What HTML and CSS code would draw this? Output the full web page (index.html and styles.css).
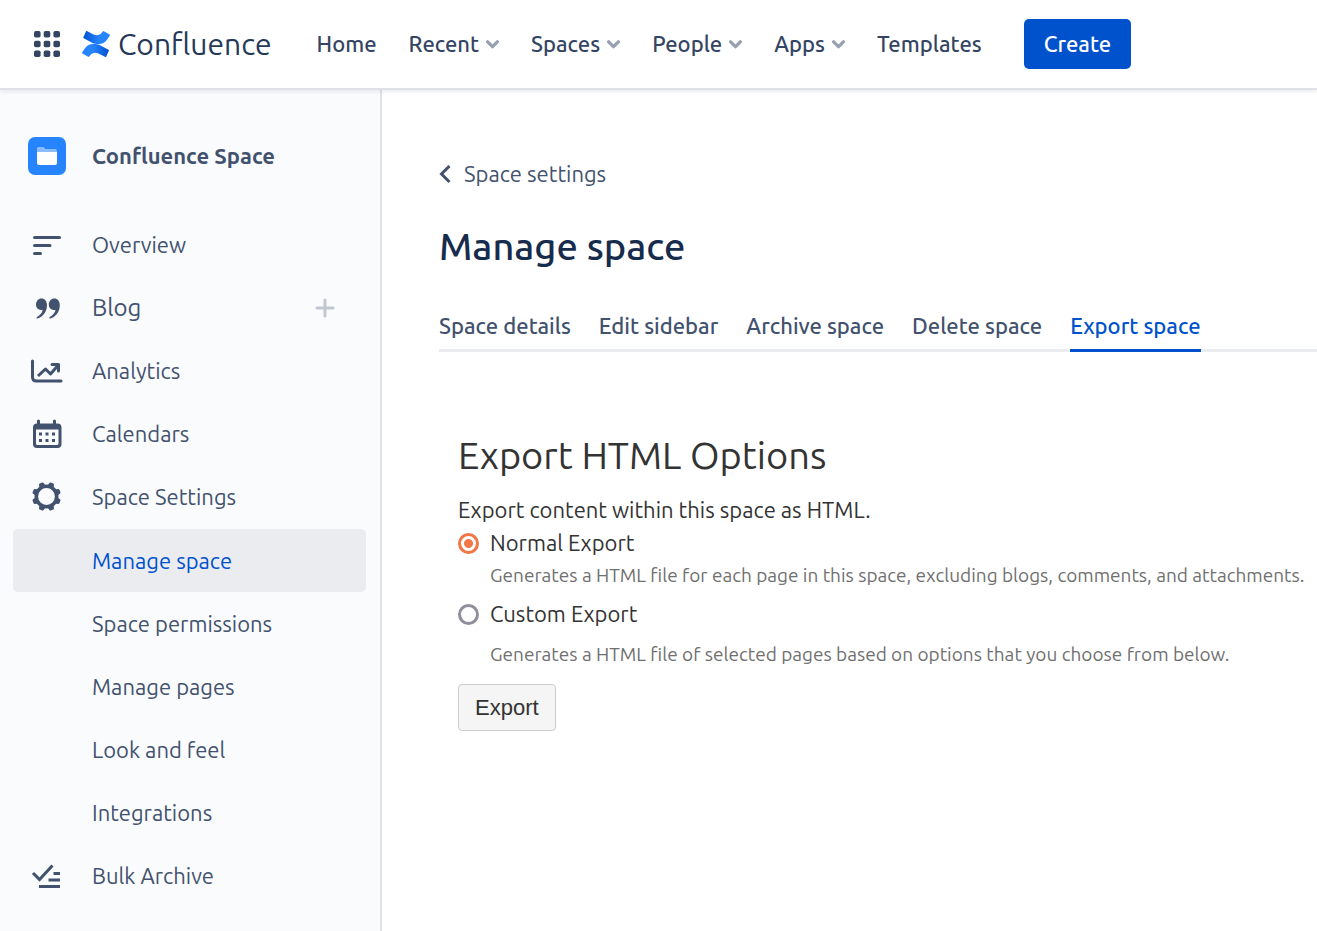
FILE: index.html
```html
<!DOCTYPE html>
<html lang="en">
<head>
    <meta charset="UTF-8">
    <meta name="viewport" content="width=device-width, initial-scale=1.0">
    <title>Manage space - Confluence</title>
    <link rel="stylesheet" href="styles.css">
</head>
<body>
    <header class="topbar">
        <button class="icon-btn" type="button" aria-label="Switch product">
            <svg width="26" height="26" viewBox="0 0 26 26" fill="#344563">
                <rect x="0" y="0" width="6.600" height="6.600" rx="1.800"/>
                <rect x="9.700" y="0" width="6.600" height="6.600" rx="1.800"/>
                <rect x="19.400" y="0" width="6.600" height="6.600" rx="1.800"/>
                <rect x="0" y="9.700" width="6.600" height="6.600" rx="1.800"/>
                <rect x="9.700" y="9.700" width="6.600" height="6.600" rx="1.800"/>
                <rect x="19.400" y="9.700" width="6.600" height="6.600" rx="1.800"/>
                <rect x="0" y="19.400" width="6.600" height="6.600" rx="1.800"/>
                <rect x="9.700" y="19.400" width="6.600" height="6.600" rx="1.800"/>
                <rect x="19.400" y="19.400" width="6.600" height="6.600" rx="1.800"/>
            </svg>
        </button>
        <a class="logo" href="#">
            <svg width="28" height="26" viewBox="0 0 28 26">
                <defs>
                    <linearGradient id="wave-top" x1="0" y1="0" x2="1" y2="0">
                        <stop offset="0" stop-color="#0052cc"/>
                        <stop offset="0.6" stop-color="#2684ff"/>
                    </linearGradient>
                    <linearGradient id="wave-bottom" x1="1" y1="0" x2="0" y2="0">
                        <stop offset="0" stop-color="#0052cc"/>
                        <stop offset="0.6" stop-color="#2684ff"/>
                    </linearGradient>
                </defs>
                <path fill="url(#wave-top)" d="M4 0.300 L1.300 6.400 Q1.100 7 1.700 7.300 L7.800 10.600 C14 14.200 19.500 14 23.500 10.400 C25.200 8.600 26.600 6.600 27.800 4.400 Q28.100 3.800 27.500 3.400 L21.800 0.200 Q21.100 -0.100 20.800 0.500 C18.200 4.400 15 5 11.500 3.400 L4.900 0 Q4.300 -0.200 4 0.300z"/>
                <path fill="url(#wave-bottom)" d="M24.200 25.700 L26.900 19.600 Q27.100 19 26.500 18.700 L20.400 15.400 C14 11.800 8.500 12 4.500 15.600 C2.800 17.400 1.400 19.400 0.200 21.600 Q-0.100 22.200 0.500 22.600 L6.200 25.800 Q6.900 26.100 7.200 25.500 C9.800 21.600 13 21 16.500 22.600 L23.300 26 Q23.900 26.200 24.200 25.700z"/>
            </svg>
            <span>Confluence</span>
        </a>
        <nav class="topnav">
            <a href="#">Home</a>
            <button type="button">Recent <svg class="chevron" viewBox="0 0 12 8"><path d="M1.500 1.500 L6 6 L10.500 1.500"/></svg></button>
            <button type="button">Spaces <svg class="chevron" viewBox="0 0 12 8"><path d="M1.500 1.500 L6 6 L10.500 1.500"/></svg></button>
            <button type="button">People <svg class="chevron" viewBox="0 0 12 8"><path d="M1.500 1.500 L6 6 L10.500 1.500"/></svg></button>
            <button type="button">Apps <svg class="chevron" viewBox="0 0 12 8"><path d="M1.500 1.500 L6 6 L10.500 1.500"/></svg></button>
            <a href="#">Templates</a>
        </nav>
        <button class="create-btn" type="button">Create</button>
    </header>

    <div class="layout">
        <aside class="sidebar">
            <a class="space-title" href="#">
                <svg width="38" height="38" viewBox="0 0 38 38">
                    <rect width="38" height="38" rx="7" fill="#2684ff"/>
                    <path fill="#8bbcff" d="M9 16v-4.500a1.500 1.500 0 0 1 1.500-1.500h5l2 2h9.500a2 2 0 0 1 2 2v3z"/>
                    <path fill="#fff" d="M9 15h20v11a2 2 0 0 1-2 2h-16a2 2 0 0 1-2-2z"/>
                </svg>
                <span>Confluence Space</span>
            </a>
            <nav class="side-nav">
                <a class="side-link" href="#">
                    <svg class="side-icon" viewBox="0 0 38 38" stroke-width="3" stroke-linecap="round">
                        <path d="M6.500 11.500H31.500M6.500 19.500H22M6.500 27.500H12.500"/>
                    </svg>
                    <span>Overview</span>
                </a>
                <div class="side-row">
                    <a class="side-link large" href="#">
                        <svg class="side-icon solid" viewBox="0 0 38 38">
                            <path id="quote-mark" d="M13.500 9.500c3.200 0 5.500 2.500 5.500 6.700c0 6.600-4.200 11.600-9.400 13.300c-1 .3-1.500-.9-.6-1.500c3.200-1.700 5.200-4.200 5.700-7.200c-3.600 1-6.700-1.400-6.700-5.200c0-3.400 2.300-6.100 5.500-6.100z"/>
                            <use href="#quote-mark" x="12.800"/>
                        </svg>
                        <span>Blog</span>
                    </a>
                    <button class="add-btn" type="button" aria-label="Create blog">
                        <svg width="20" height="20" viewBox="0 0 20 20"><path d="M10 2V18M2 10H18"/></svg>
                    </button>
                </div>
                <a class="side-link" href="#">
                    <svg class="side-icon" viewBox="0 0 38 38" stroke-width="3" stroke-linecap="round">
                        <path d="M4.500 9V25Q4.500 29 8.500 29H33"/>
                        <path stroke-linecap="butt" stroke-linejoin="round" d="M10 24L17.500 17L22.500 22L29.500 14"/>
                        <path stroke-linejoin="round" d="M24 12.500H30.500V19"/>
                    </svg>
                    <span>Analytics</span>
                </a>
                <a class="side-link" href="#">
                    <svg class="side-icon solid" viewBox="0 0 38 38">
                        <path fill-rule="evenodd" d="M9 8.500V6a1.500 1.500 0 0 1 3 0v2.500H25V6a1.500 1.500 0 0 1 3 0v2.500h1.500a4 4 0 0 1 4 4V29a4 4 0 0 1-4 4H9a4 4 0 0 1-4-4V12.500a4 4 0 0 1 4-4zM8 14.500V28.500a1.500 1.500 0 0 0 1.500 1.500H29a1.500 1.500 0 0 0 1.500-1.500V14.500z"/>
                        <path d="M11 17.500h3v3h-3zM17.500 17.500h3v3h-3zM24 17.500h3v3h-3zM11 24h3v3h-3zM17.500 24h3v3h-3zM24 24h3v3h-3z"/>
                    </svg>
                    <span>Calendars</span>
                </a>
                <a class="side-link" href="#">
                    <svg class="side-icon" viewBox="0 0 38 38">
                        <circle cx="18.500" cy="18.500" r="10.200" stroke-width="3.600"/>
                        <g fill="#42526e" stroke="none" transform="rotate(22.500 18.500 18.500)">
                            <path id="tooth" d="M15.300 8L16 5Q16.200 4 17.200 4H19.800Q20.800 4 21 5L21.700 8z"/>
                            <use href="#tooth" transform="rotate(45 18.500 18.500)"/>
                            <use href="#tooth" transform="rotate(90 18.500 18.500)"/>
                            <use href="#tooth" transform="rotate(135 18.500 18.500)"/>
                            <use href="#tooth" transform="rotate(180 18.500 18.500)"/>
                            <use href="#tooth" transform="rotate(225 18.500 18.500)"/>
                            <use href="#tooth" transform="rotate(270 18.500 18.500)"/>
                            <use href="#tooth" transform="rotate(315 18.500 18.500)"/>
                        </g>
                    </svg>
                    <span>Space Settings</span>
                </a>
                <a class="side-link sub active" href="#">Manage space</a>
                <a class="side-link sub" href="#">Space permissions</a>
                <a class="side-link sub" href="#">Manage pages</a>
                <a class="side-link sub" href="#">Look and feel</a>
                <a class="side-link sub" href="#">Integrations</a>
                <a class="side-link last" href="#">
                    <svg class="side-icon" viewBox="0 0 38 38" stroke-width="3">
                        <path d="M5 16L11.500 22.500L24.500 8.500M25.500 16.500H32M20.500 23H32M11 29.500H32"/>
                    </svg>
                    <span>Bulk Archive</span>
                </a>
            </nav>
        </aside>

        <main class="content">
            <a class="back-link" href="#">
                <svg width="14" height="20" viewBox="0 0 14 20"><path d="M10.500 2L2.500 10L10.500 18"/></svg>
                <span>Space settings</span>
            </a>
            <h1>Manage space</h1>
            <nav class="tabs">
                <a href="#">Space details</a>
                <a href="#">Edit sidebar</a>
                <a href="#">Archive space</a>
                <a href="#">Delete space</a>
                <a class="selected" href="#">Export space</a>
            </nav>

            <form class="export-form">
                <h2>Export HTML Options</h2>
                <p class="intro">Export content within this space as HTML.</p>
                <div class="option">
                    <input type="radio" id="normal-export" name="export-type" aria-describedby="normal-help" checked>
                    <label for="normal-export">Normal Export</label>
                </div>
                <p class="help" id="normal-help">Generates a HTML file for each page in this space, excluding blogs, comments, and attachments.</p>
                <div class="option">
                    <input type="radio" id="custom-export" name="export-type" aria-describedby="custom-help">
                    <label for="custom-export">Custom Export</label>
                </div>
                <p class="help spaced" id="custom-help">Generates a HTML file of selected pages based on options that you choose from below.</p>
                <button class="export-btn" type="button">Export</button>
            </form>
        </main>
    </div>
</body>
</html>
```
FILE: styles.css
```css
* {
    box-sizing: border-box;
}

body {
    margin: 0;
    min-height: 100vh;
    display: flex;
    flex-direction: column;
    font-family: Ubuntu, "Noto Sans", sans-serif;
    font-size: 22px;
    line-height: 32px;
    color: #42526e;
    background: #fff;
}

a {
    color: inherit;
    text-decoration: none;
}

button {
    font: inherit;
    color: inherit;
    background: none;
    border: none;
    padding: 0;
    cursor: pointer;
}

svg {
    display: block;
    flex: none;
}

h1, h2, p {
    margin: 0;
}

/* Header */
.topbar {
    position: relative;
    display: flex;
    align-items: center;
    height: 90px;
    padding: 0 34px;
    background: #fff;
    border-bottom: 2px solid #dfe1e6;
    box-shadow: 0 2px 4px rgba(9, 30, 66, 0.08);
    white-space: nowrap;
}

.logo {
    display: flex;
    align-items: center;
    gap: 8px;
    margin-left: 22px;
    font-size: 30px;
    color: #253858;
}

.topnav {
    display: flex;
    align-items: center;
    gap: 32px;
    margin-left: 45px;
    font-weight: 500;
    color: #344563;
}

.topnav button {
    display: flex;
    align-items: center;
    gap: 7px;
}

.chevron {
    width: 13px;
    height: 9px;
    fill: none;
    stroke: #97a0af;
    stroke-width: 3;
    stroke-linecap: round;
    stroke-linejoin: round;
}

.create-btn {
    margin-left: 42px;
    padding: 9px 20px;
    border-radius: 5px;
    background: #0052cc;
    color: #fff;
    font-weight: 500;
}

.layout {
    display: flex;
    flex: 1;
}

/* Sidebar */
.sidebar {
    flex: 0 0 382px;
    padding: 47px 14px 0 13px;
    background: #fafbfd;
    border-right: 2px solid #e1e2e5;
}

.space-title {
    display: flex;
    align-items: center;
    gap: 26px;
    padding-left: 15px;
    font-weight: 700;
}

.side-nav {
    display: flex;
    flex-direction: column;
    margin-top: 39px;
}

.side-link {
    display: flex;
    align-items: center;
    flex: 1;
    gap: 26px;
    min-height: 63px;
    padding: 0 0 2px 15px;
    border-radius: 5px;
}

.side-link.large {
    font-size: 24px;
}

.side-link.sub {
    padding: 0 0 0 79px;
}

.side-link.last {
    padding-bottom: 0;
}

.side-link.active {
    background: #ebecf0;
    color: #0052cc;
}

.side-row {
    display: flex;
    align-items: center;
}

.side-icon {
    width: 38px;
    height: 38px;
    fill: none;
    stroke: #42526e;
}

.side-icon.solid {
    fill: #42526e;
    stroke: none;
}

.add-btn {
    margin-right: 31px;
    padding-bottom: 2px;
}

.add-btn path {
    stroke: #c1c7d0;
    stroke-width: 3;
    stroke-linecap: round;
}

/* Content */
.content {
    flex: 1;
    min-width: 0;
    padding: 68px 0 40px 57px;
}

.back-link {
    display: inline-flex;
    align-items: center;
    gap: 11px;
}

.back-link path {
    fill: none;
    stroke: #42526e;
    stroke-width: 3;
}

h1 {
    margin-top: 30px;
    font-size: 38px;
    line-height: 48px;
    font-weight: 500;
    color: #172b4d;
}

.tabs {
    display: flex;
    gap: 28px;
    margin-top: 40px;
    font-weight: 500;
    white-space: nowrap;
    box-shadow: inset 0 -3px #ebecf0;
}

.tabs a {
    padding-bottom: 7px;
    border-bottom: 3px solid transparent;
}

.tabs .selected {
    color: #0052cc;
    border-bottom-color: #0052cc;
}

.export-form {
    padding: 79px 0 0 19px;
    color: #333;
}

h2 {
    font-size: 38px;
    line-height: 48px;
    font-weight: 400;
}

.intro {
    margin: 15px 0 1px;
}

.option {
    display: flex;
    align-items: center;
    gap: 11px;
}

.option input {
    appearance: none;
    flex: none;
    width: 21px;
    height: 21px;
    margin: 0;
    border: 3px solid #8f8f9d;
    border-radius: 50%;
}

.option input:checked {
    border-color: #f07746;
    background: radial-gradient(circle, #f07746 4px, #fff 5px);
}

.help {
    margin: 0 0 7px 32px;
    font-size: 19px;
    color: #707070;
}

.help.spaced {
    margin-top: 8px;
}

.export-btn {
    margin-top: 7px;
    padding: 7px 16px;
    font-family: "Liberation Sans", Arial, sans-serif;
    font-size: 22px;
    line-height: 31px;
    color: #333;
    background: #f5f5f5;
    border: 1px solid #ccc;
    border-radius: 4px;
}
```
